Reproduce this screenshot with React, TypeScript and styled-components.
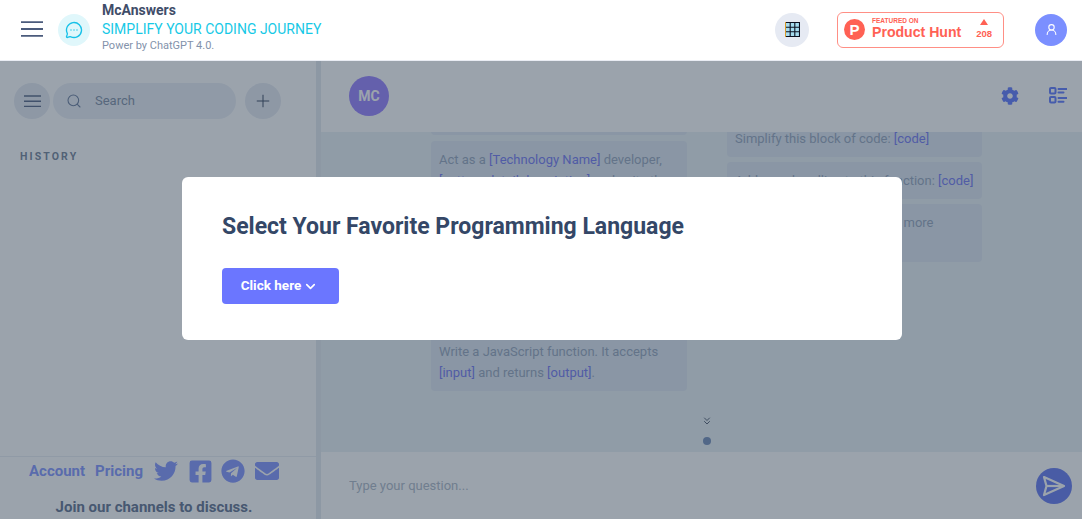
import styled, { createGlobalStyle } from "styled-components";
import {
  ChevronDown,
  ChevronsDown,
  MessageCircleMore,
  Plus,
  Search,
  UserRound,
} from "lucide-react";
import { FaCog, FaEnvelope, FaFacebookSquare, FaTelegram, FaTwitter } from "react-icons/fa";

const GlobalStyle = createGlobalStyle`
  * {
    box-sizing: border-box;
  }
  html, body {
    margin: 0;
    height: 100%;
    overflow: hidden;
    font-family: Roboto, "Noto Sans", sans-serif;
    background: #ffffff;
  }
`;

const Page = styled.div`
  height: 100vh;
  display: flex;
  flex-direction: column;
`;

const TopBar = styled.header`
  position: relative;
  z-index: 20;
  height: 61px;
  flex: none;
  display: flex;
  align-items: center;
  padding: 0 15px 1px 21px;
  background: #ffffff;
  border-bottom: 1px solid #e9ecf3;
`;

const Burger = styled.svg<{ $size: number }>`
  width: ${props => props.$size}px;
  height: ${props => props.$size * 0.73}px;
  flex: none;
  color: #4b5b7c;
`;

const ChatBadge = styled.div`
  width: 32px;
  height: 32px;
  margin-left: 15px;
  border-radius: 50%;
  display: flex;
  align-items: center;
  justify-content: center;
  background: #e0f7fb;
  color: #17c1e8;
`;

const Brand = styled.div`
  margin: 0 0 6px 12px;
  display: flex;
  flex-direction: column;
`;

const BrandName = styled.div`
  font-size: 14px;
  line-height: 19px;
  font-weight: 700;
  color: #3f4d69;
`;

const BrandTag = styled.div`
  font-size: 14px;
  line-height: 18px;
  color: #17c9e6;
`;

const BrandNote = styled.div`
  font-size: 11px;
  line-height: 15px;
  color: #8392ab;
`;

const TopActions = styled.div`
  margin-left: auto;
  display: flex;
  align-items: center;
`;

const GridButton = styled.div`
  width: 34px;
  height: 34px;
  border-radius: 50%;
  display: flex;
  align-items: center;
  justify-content: center;
  background: #e6eaf3;
`;

const HuntBadge = styled.div`
  width: 167px;
  height: 36px;
  margin-left: 28px;
  padding: 0 11px 0 6px;
  display: flex;
  align-items: center;
  border: 1px solid #ff8f85;
  border-radius: 6px;
  color: #ff6154;
  font-family: "Liberation Sans", Arial, sans-serif;
`;

const HuntLogo = styled.div`
  width: 21px;
  height: 21px;
  flex: none;
  border-radius: 50%;
  display: flex;
  align-items: center;
  justify-content: center;
  background: #ff6154;
  color: #ffffff;
  font-size: 15px;
  font-weight: 700;
`;

const HuntText = styled.div`
  margin-left: 7px;
  display: flex;
  flex-direction: column;
`;

const HuntSmall = styled.span`
  margin-top: -2px;
  font-size: 6.5px;
  line-height: 7px;
  font-weight: 700;
`;

const HuntName = styled.span`
  font-size: 14.1px;
  line-height: 17px;
  font-weight: 700;
`;

const HuntVotes = styled.div`
  margin-left: auto;
  display: flex;
  flex-direction: column;
  align-items: center;
  font-size: 9.5px;
  font-weight: 700;
  line-height: 12px;
`;

const HuntArrow = styled.span`
  width: 0;
  height: 0;
  margin-bottom: 3px;
  border-left: 4px solid transparent;
  border-right: 4px solid transparent;
  border-bottom: 6px solid #ff6154;
`;

const UserButton = styled.div`
  width: 32px;
  height: 32px;
  margin-left: 31px;
  border-radius: 50%;
  display: flex;
  align-items: center;
  justify-content: center;
  background: #7b8fff;
  color: #ffffff;
`;

const Body = styled.div`
  flex: 1;
  min-height: 0;
  display: flex;
`;

const Sidebar = styled.aside`
  width: 316px;
  flex: none;
  display: flex;
  flex-direction: column;
  background: #ffffff;
`;

const SearchRow = styled.div`
  display: flex;
  align-items: center;
  padding: 22px 0 0 14px;
`;

const RoundButton = styled.div`
  width: 36px;
  height: 36px;
  flex: none;
  border-radius: 50%;
  display: flex;
  align-items: center;
  justify-content: center;
  background: #e4e8f1;
  color: #2b3a55;
`;

const SearchBox = styled.div`
  width: 183px;
  height: 36px;
  margin: 0 9px 0 3px;
  padding-left: 13px;
  display: flex;
  align-items: center;
  border-radius: 18px;
  background: #e9edf4;
  color: #5f7397;
`;

const SearchInput = styled.input`
  width: 120px;
  margin: -2px 0 0 13px;
  border: 0;
  outline: 0;
  padding: 0;
  background: transparent;
  font: 13px Roboto, sans-serif;
  &::placeholder {
    color: #76879f;
    opacity: 1;
  }
`;

const HistoryLabel = styled.div`
  margin: 32px 0 0 20px;
  font-size: 10.5px;
  line-height: 12px;
  font-weight: 700;
  letter-spacing: 2.1px;
  color: #6b7a92;
`;

const SideFooter = styled.div`
  margin-top: auto;
  height: 63px;
  display: flex;
  flex-direction: column;
  border-top: 1px solid #e9ecf3;
`;

const FooterLinks = styled.div`
  height: 28px;
  padding-left: 29px;
  display: flex;
  align-items: center;
  color: #7b8fff;
`;

const FooterLink = styled.a<{ $gap: number }>`
  margin-right: ${props => props.$gap}px;
  font-size: 15px;
  font-weight: 700;
`;

const SocialIcon = styled.span<{ $gap: number }>`
  margin-right: ${props => props.$gap}px;
  display: flex;
`;

const FooterNote = styled.div`
  margin-top: 13px;
  padding-right: 8px;
  text-align: center;
  font-size: 15px;
  line-height: 18px;
  font-weight: 700;
  color: #566888;
`;

const Divider = styled.div`
  width: 5px;
  flex: none;
  background: #e2e9ef;
`;

const Main = styled.main`
  flex: 1;
  min-width: 0;
  display: flex;
  flex-direction: column;
`;

const ChatHeader = styled.div`
  height: 71px;
  flex: none;
  padding: 0 15px 2px 28px;
  display: flex;
  align-items: center;
  background: #ffffff;
`;

const ChatAvatar = styled.div`
  width: 40px;
  height: 40px;
  border-radius: 50%;
  display: flex;
  align-items: center;
  justify-content: center;
  background: #9178ff;
  color: #ffffff;
  font-size: 14px;
  font-weight: 700;
`;

const HeaderTools = styled.div`
  margin-left: auto;
  display: flex;
  align-items: center;
  gap: 30px;
  color: #5570ff;
`;

const ChatArea = styled.div`
  flex: 1;
  min-height: 0;
  display: flex;
  flex-direction: column;
  background: #e8f0f4;
`;

const Prompts = styled.div`
  flex: 1;
  min-height: 0;
  overflow: hidden;
  padding-left: 110px;
  display: grid;
  grid-template-columns: 256px 255px;
  column-gap: 40px;
  align-items: start;
`;

const PromptColumn = styled.div<{ $scroll: number; $gap: number }>`
  margin-top: ${props => -props.$scroll}px;
  display: flex;
  flex-direction: column;
  gap: ${props => props.$gap}px;
`;

const PromptCard = styled.div`
  padding: 8px;
  border-radius: 4px;
  background: #dce5f0;
  font-size: 13px;
  line-height: 21px;
  color: #8f9fb8;
`;

const Slot = styled.span`
  color: #6a70f0;
`;

const ScrollHint = styled.div`
  height: 40px;
  flex: none;
  padding: 0 0 7px 11px;
  display: flex;
  flex-direction: column;
  align-items: center;
  justify-content: flex-end;
  color: #1c2a44;
`;

const ScrollDot = styled.span`
  width: 8px;
  height: 8px;
  margin-top: 10px;
  border-radius: 50%;
  background: #6a86b5;
`;

const Composer = styled.div`
  height: 67px;
  flex: none;
  padding: 0 10px 0 28px;
  display: flex;
  align-items: center;
  background: #ffffff;
`;

const QuestionInput = styled.input`
  flex: 1;
  border: 0;
  outline: 0;
  padding: 0;
  background: transparent;
  font: 13px Roboto, sans-serif;
  &::placeholder {
    color: #a9b4c4;
    opacity: 1;
  }
`;

const SendButton = styled.div`
  width: 36px;
  height: 36px;
  border-radius: 50%;
  display: flex;
  align-items: center;
  justify-content: center;
  background: #5a70f0;
  color: #ffffff;
`;

const Overlay = styled.div`
  position: fixed;
  inset: 0;
  z-index: 10;
  padding: 0 0 2px 2px;
  display: flex;
  align-items: center;
  justify-content: center;
  background: rgba(55, 72, 90, 0.5);
`;

const Modal = styled.div`
  width: 720px;
  height: 163px;
  padding: 33px 40px 0;
  border-radius: 6px;
  background: #ffffff;
`;

const ModalTitle = styled.h2`
  margin: 0;
  font-size: 23px;
  line-height: 34px;
  font-weight: 700;
  color: #344767;
`;

const ModalButton = styled.button`
  width: 117px;
  height: 36px;
  margin-top: 24px;
  padding: 0 2px 3px 0;
  border: 0;
  border-radius: 4px;
  display: flex;
  align-items: center;
  justify-content: center;
  gap: 2px;
  background: #6b76ff;
  color: #ffffff;
  font: 700 13.5px Roboto, sans-serif;
`;

const ButtonCaret = styled(ChevronDown)`
  margin-top: 3px;
`;

function BurgerIcon({ size }: { size: number }) {
  return (
    <Burger $size={size} viewBox="0 0 22 16">
      <path d="M0 1.2h22M0 8h22M0 14.8h22" stroke="currentColor" strokeWidth="1.8" />
    </Burger>
  );
}

function GridIcon() {
  return (
    <svg width="15" height="15" viewBox="0 0 15 15">
      <rect x="0.5" y="0.5" width="14" height="14" fill="#a5dcf0" />
      <path
        d="M0 .5h15M0 5.2h15M0 9.8h15M0 14.5h15M5.2 0v15M9.8 0v15M14.5 0v15"
        stroke="#0c1020"
        strokeWidth="1.1"
      />
      <path d="M0.5 0v15" stroke="#d99a26" strokeWidth="1" />
    </svg>
  );
}

function ListIcon() {
  return (
    <svg width="18" height="17" viewBox="0 0 18 17" fill="none" stroke="currentColor" strokeWidth="2">
      <rect x="1" y="1" width="5.5" height="5.5" rx="1" />
      <rect x="1" y="10" width="5.5" height="5.5" rx="1" />
      <path d="M9.5 2h8M9.5 5.6h5M9.5 11h8M9.5 14.8h5" strokeLinecap="round" />
    </svg>
  );
}

function SendIcon() {
  return (
    <svg width="24" height="22" viewBox="0 0 24 22" fill="none" stroke="currentColor" strokeWidth="2.2" strokeLinejoin="round">
      <path d="M2 2l20 9-20 9 2.5-9z" />
      <path d="M4.5 11h17" />
    </svg>
  );
}

function App() {
  return (
    <Page>
      <GlobalStyle />
      <TopBar>
        <BurgerIcon size={22} />
        <ChatBadge>
          <MessageCircleMore size={18} strokeWidth={1.8} />
        </ChatBadge>
        <Brand>
          <BrandName>McAnswers</BrandName>
          <BrandTag>SIMPLIFY YOUR CODING JOURNEY</BrandTag>
          <BrandNote>Power by ChatGPT 4.0.</BrandNote>
        </Brand>
        <TopActions>
          <GridButton>
            <GridIcon />
          </GridButton>
          <HuntBadge>
            <HuntLogo>P</HuntLogo>
            <HuntText>
              <HuntSmall>FEATURED ON</HuntSmall>
              <HuntName>Product Hunt</HuntName>
            </HuntText>
            <HuntVotes>
              <HuntArrow />
              208
            </HuntVotes>
          </HuntBadge>
          <UserButton>
            <UserRound size={13} strokeWidth={2} />
          </UserButton>
        </TopActions>
      </TopBar>
      <Body>
        <Sidebar>
          <SearchRow>
            <RoundButton>
              <BurgerIcon size={17} />
            </RoundButton>
            <SearchBox>
              <Search size={16} strokeWidth={1.6} />
              <SearchInput placeholder="Search" />
            </SearchBox>
            <RoundButton>
              <Plus size={20} strokeWidth={1.2} />
            </RoundButton>
          </SearchRow>
          <HistoryLabel>HISTORY</HistoryLabel>
          <SideFooter>
            <FooterLinks>
              <FooterLink $gap={10}>Account</FooterLink>
              <FooterLink $gap={11}>Pricing</FooterLink>
              <SocialIcon $gap={10}>
                <FaTwitter size={24} />
              </SocialIcon>
              <SocialIcon $gap={8}>
                <FaFacebookSquare size={25} />
              </SocialIcon>
              <SocialIcon $gap={10}>
                <FaTelegram size={24} />
              </SocialIcon>
              <SocialIcon $gap={0}>
                <FaEnvelope size={24} />
              </SocialIcon>
            </FooterLinks>
            <FooterNote>Join our channels to discuss.</FooterNote>
          </SideFooter>
        </Sidebar>
        <Divider />
        <Main>
          <ChatHeader>
            <ChatAvatar>MC</ChatAvatar>
            <HeaderTools>
              <FaCog size={18} />
              <ListIcon />
            </HeaderTools>
          </ChatHeader>
          <ChatArea>
            <Prompts>
              <PromptColumn $scroll={34} $gap={6}>
                <PromptCard>
                  Explain this code: <Slot>[code]</Slot>
                </PromptCard>
                <PromptCard>
                  Act as a <Slot>[Technology Name]</Slot> developer, <Slot>[pattern detail description]</Slot>
                  {" "}and write the code for me.
                </PromptCard>
                <PromptCard>
                  Write a unit test that covers every branch of this function: <Slot>[code]</Slot>
                </PromptCard>
                <PromptCard>
                  Convert this code to <Slot>[language]</Slot>: <Slot>[code]</Slot>
                </PromptCard>
                <PromptCard>
                  Write a JavaScript function. It accepts <Slot>[input]</Slot> and returns <Slot>[output]</Slot>.
                </PromptCard>
              </PromptColumn>
              <PromptColumn $scroll={12} $gap={5}>
                <PromptCard>
                  Simplify this block of code: <Slot>[code]</Slot>
                </PromptCard>
                <PromptCard>
                  Add error handling to this function: <Slot>[code]</Slot>
                </PromptCard>
                <PromptCard>
                  Reformat the functions to be more readable: <Slot>[code]</Slot>
                </PromptCard>
              </PromptColumn>
            </Prompts>
            <ScrollHint>
              <ChevronsDown size={12} strokeWidth={1.6} />
              <ScrollDot />
            </ScrollHint>
          </ChatArea>
          <Composer>
            <QuestionInput placeholder="Type your question..." />
            <SendButton>
              <SendIcon />
            </SendButton>
          </Composer>
        </Main>
      </Body>
      <Overlay>
        <Modal>
          <ModalTitle>Select Your Favorite Programming Language</ModalTitle>
          <ModalButton>
            Click here <ButtonCaret size={15} strokeWidth={2.6} />
          </ModalButton>
        </Modal>
      </Overlay>
    </Page>
  );
}

export default App;
